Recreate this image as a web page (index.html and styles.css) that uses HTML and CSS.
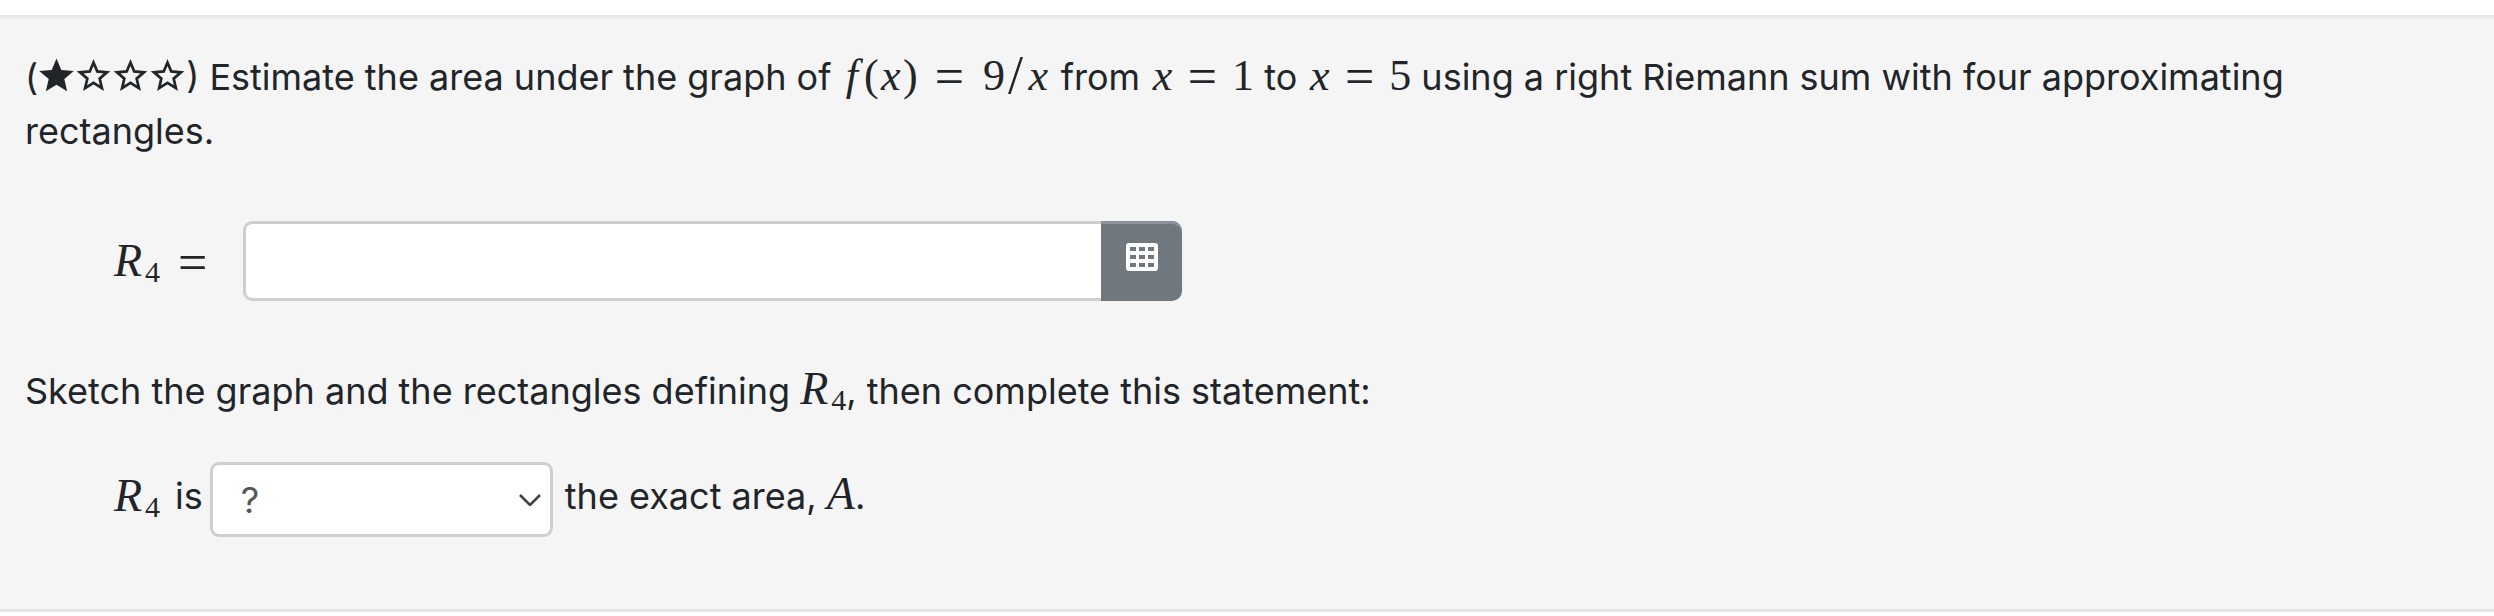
FILE: index.html
```html
<!DOCTYPE html>
<html lang="en">
<head>
<meta charset="utf-8">
<title>Riemann sum question</title>
<link rel="stylesheet" href="styles.css">
</head>
<body>
<div class="topbar"></div>
<main class="panel">
  <p class="line first">(<span class="stars"><svg class="star" viewBox="0 0 24 24"><path class="full" d="M12 1l3.2 7.6 8.3.7-6.3 5.4 1.9 8.1L12 18.5l-7.1 4.3 1.9-8.1L.5 9.3l8.3-.7z"/></svg><svg class="star" viewBox="0 0 24 24"><path class="open" d="M12 3.6l2.5 6 6.5.6-4.9 4.2 1.5 6.3-5.6-3.4-5.6 3.4 1.5-6.3L3 10.2l6.5-.6z"/></svg><svg class="star" viewBox="0 0 24 24"><path class="open" d="M12 3.6l2.5 6 6.5.6-4.9 4.2 1.5 6.3-5.6-3.4-5.6 3.4 1.5-6.3L3 10.2l6.5-.6z"/></svg><svg class="star" viewBox="0 0 24 24"><path class="open" d="M12 3.6l2.5 6 6.5.6-4.9 4.2 1.5 6.3-5.6-3.4-5.6 3.4 1.5-6.3L3 10.2l6.5-.6z"/></svg></span>) Estimate the area under the graph of <span class="math gap-f"><i class="f">f</i>(<i class="x">x</i>)<span class="op wide">=</span>9<span class="slash">/</span><i class="x">x</i></span> from <span class="math"><i class="x">x</i><span class="op">=</span>1</span> to <span class="math"><i class="x">x</i><span class="op">=</span>5</span> using a right Riemann sum with four approximating rectangles.</p>
  <div class="answer-row">
    <span class="math label"><i class="r">R</i><sub>4</sub><span class="op label-op">=</span></span>
    <div class="input-group">
      <input class="field" type="text" aria-label="R4">
      <button class="calc" type="button" aria-label="Help">
        <svg viewBox="0 0 32 28" class="calc-icon"><rect width="32" height="28" rx="3" fill="#fff"/><g fill="#6f777f"><rect x="4" y="4" width="6" height="4"/><rect x="13" y="4" width="6" height="4"/><rect x="22" y="4" width="6" height="4"/><rect x="4" y="12" width="6" height="4"/><rect x="13" y="12" width="6" height="4"/><rect x="22" y="12" width="6" height="4"/><rect x="4" y="20" width="6" height="4"/><rect x="13" y="20" width="6" height="4"/><rect x="22" y="20" width="6" height="4"/></g></svg>
      </button>
    </div>
  </div>
  <p class="line sketch">Sketch the graph and the rectangles defining <span class="math"><i class="r">R</i><sub>4</sub></span>, then complete this statement:</p>
  <div class="select-row">
    <span class="math row-text"><i class="r">R</i><sub>4</sub></span>
    <span class="is row-text">is</span>
    <div class="select">
      <span class="select-value">?</span>
      <svg class="chevron" viewBox="0 0 22 12"><path d="M1 1l10 10L21 1" fill="none" stroke="#444" stroke-width="2.6"/></svg>
    </div>
    <span class="rest row-text">the exact area, <span class="math"><i class="r">A</i></span>.</span>
  </div>
</main>
</body>
</html>
```

FILE: styles.css
```css
* { box-sizing: border-box; }
html, body { margin: 0; padding: 0; background: #fff; }
body {
  height: 616px;
  overflow: hidden;
  font-family: Inter, "Liberation Sans", sans-serif;
  font-size: 36px;
  line-height: 54px;
  color: #212529;
}
.topbar { height: 15px; }
.panel {
  height: 597px;
  padding: 35px 25px 0;
  background: linear-gradient(#e2e2e2, #f5f5f5 5px);
  border-bottom: 3px solid #e4e4e4;
}
.line { margin: 0; max-width: 2340px; }
.math { font-family: "Liberation Serif", serif; font-size: 44px; line-height: 1; }
.math i { font-style: italic; }
.math sub { font-size: 30px; line-height: 0; vertical-align: -6px; margin-left: 3px; }
.math .f { margin: 0 6px 0 4px; }
.math .x { margin: 0 2.5px; }
.math .r { font-size: 46px; }
.op { font-size: 52px; margin: 0 15px 0 13px; line-height: 0; vertical-align: -4px; }
.op.wide { margin: 0 19px 0 17px; }
.op.label-op { margin-left: 18px; }
.slash { font-size: 54px; line-height: 0; margin: 0 3px 0 3px; vertical-align: -3px; }
.stars { display: inline-flex; vertical-align: -3px; }
.star { width: 37px; height: 36px; display: block; }
.full { fill: #212529; }
.open { fill: none; stroke: #212529; stroke-width: 1.8; }
.answer-row {
  display: flex;
  align-items: center;
  margin: 63px 0 0 89px;
  height: 80px;
}
.label { width: 129px; white-space: nowrap; }
.input-group { display: flex; height: 80px; width: 939px; }
.field {
  flex: 1;
  min-width: 0;
  border: 3px solid #cfcfcf;
  border-right: 0;
  border-radius: 9px 0 0 9px;
  background: #fff;
  outline: 0;
}
.calc {
  width: 81px;
  padding: 0;
  border: 0;
  border-radius: 0 10px 10px 0;
  background: #6f777f;
  box-shadow: inset 0 3px 0 #8a9198;
  display: flex;
  align-items: center;
  justify-content: center;
}
.calc-icon { width: 32px; height: 28px; display: block; margin-top: -8px; }
.sketch { margin-top: 63px; }
.select-row {
  display: flex;
  align-items: center;
  margin: 44px 0 0 89px;
  height: 75px;
}
.row-text { position: relative; top: -4px; }
.is { margin-left: 15px; }
.select {
  width: 343px;
  height: 75px;
  margin-left: 7px;
  padding: 0 9px 0 28px;
  background: #fff;
  border: 3px solid #cfcfcf;
  border-radius: 9px;
  display: flex;
  align-items: center;
  justify-content: space-between;
  color: #555;
}
.chevron { width: 22px; height: 12px; display: block; }
.rest { margin-left: 12px; white-space: nowrap; }
```
